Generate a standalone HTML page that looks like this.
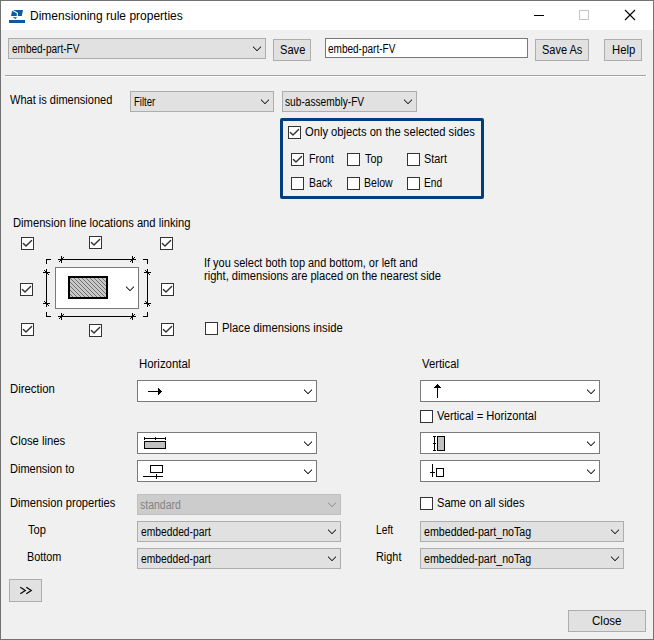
<!DOCTYPE html>
<html><head><meta charset="utf-8">
<style>
*{box-sizing:border-box;margin:0;padding:0}
html,body{width:654px;height:640px;overflow:hidden;background:#f0f0f0}
body{position:relative;font-family:"Liberation Sans",sans-serif;font-size:12px;color:#000}
.a{position:absolute;display:block}
.t{position:absolute;white-space:nowrap;line-height:14px;height:14px;transform-origin:0 0}
</style></head><body>
<div class="a" style="left:0;top:0;width:654px;height:640px;border:1px solid #727272;background:#f0f0f0"></div>
<div class="a" style="left:1px;top:1px;width:652px;height:29px;background:#fff"></div>
<svg class="a" style="left:0;top:0" width="40" height="30" viewBox="0 0 40 30">
<path d="M12.3,10 L23,10 L21.8,16 L11,16 Z" fill="#0a5aa3"/>
<path d="M12,10.1 L17.3,13.1 L17.3,16.2" fill="none" stroke="#fff" stroke-width="1.1"/>
<path d="M12.4,17.2 L17,17.2 L15.6,19 Z" fill="#0a5aa3"/>
<rect x="9" y="20" width="16" height="3" fill="#0a5aa3"/>
</svg>
<div class="a" style="left:30px;top:9px;white-space:nowrap;font-size:12px;line-height:14px;color:#000">Dimensioning rule properties</div>
<div class="a" style="left:534px;top:15px;width:10px;height:1px;background:#000"></div>
<div class="a" style="left:579px;top:10px;width:10px;height:10px;border:1px solid #c4c4c4"></div>
<svg class="a" style="left:624px;top:9px" width="12" height="12" viewBox="0 0 12 12"><path d="M1,1 L11,11 M11,1 L1,11" stroke="#000" stroke-width="1.1" fill="none"/></svg>
<div class="a" style="left:8px;top:38px;width:258px;height:21px;background:#e1e1e1;border:1px solid #adadad"></div>
<svg class="a" style="left:0;top:0" width="654" height="640" shape-rendering="crispEdges" fill="#404040"><rect x="253" y="46" width="1" height="1" fill="#8c8c8c"/><rect x="260" y="46" width="1" height="1" fill="#8c8c8c"/><rect x="254" y="47" width="1" height="1" fill="#8c8c8c"/><rect x="259" y="47" width="1" height="1" fill="#8c8c8c"/><rect x="255" y="48" width="1" height="1" fill="#8c8c8c"/><rect x="258" y="48" width="1" height="1" fill="#8c8c8c"/><rect x="256" y="49" width="1" height="1" fill="#8c8c8c"/><rect x="257" y="49" width="1" height="1" fill="#8c8c8c"/><rect x="253" y="47" width="1" height="1"/><rect x="260" y="47" width="1" height="1"/><rect x="254" y="48" width="1" height="1"/><rect x="259" y="48" width="1" height="1"/><rect x="255" y="49" width="1" height="1"/><rect x="258" y="49" width="1" height="1"/><rect x="256" y="50" width="1" height="1"/><rect x="257" y="50" width="1" height="1"/></svg>
<div class="t" style="left:12.25px;top:42px;color:#000;transform:scaleX(0.8346);">embed-part-FV</div>
<div class="a" style="left:273px;top:39px;width:38px;height:22px;background:#e1e1e1;border:1px solid #adadad"></div>
<div class="t" style="left:279.77px;top:43px;color:#000;transform:scaleX(0.9269);">Save</div>
<div class="a" style="left:325px;top:38px;width:203px;height:20px;background:#ffffff;border:1px solid #7a7a7a"></div>
<div class="t" style="left:328.00px;top:42px;color:#000;transform:scaleX(0.8346);">embed-part-FV</div>
<div class="a" style="left:535px;top:39px;width:54px;height:22px;background:#e1e1e1;border:1px solid #adadad"></div>
<div class="t" style="left:541.98px;top:43px;color:#000;transform:scaleX(0.9163);">Save As</div>
<div class="a" style="left:604px;top:39px;width:38px;height:22px;background:#e1e1e1;border:1px solid #adadad"></div>
<div class="t" style="left:612.06px;top:43px;color:#000;transform:scaleX(0.9391);">Help</div>
<div class="a" style="left:5px;top:75px;width:642px;height:2px;background:#fff"></div>
<div class="a" style="left:5px;top:75px;width:641px;height:1px;background:#a0a0a0"></div>
<div class="t" style="left:10.00px;top:93px;color:#000;transform:scaleX(0.9189);">What is dimensioned</div>
<div class="a" style="left:130px;top:91px;width:144px;height:21px;background:#e1e1e1;border:1px solid #adadad"></div>
<svg class="a" style="left:0;top:0" width="654" height="640" shape-rendering="crispEdges" fill="#404040"><rect x="261" y="99" width="1" height="1" fill="#8c8c8c"/><rect x="268" y="99" width="1" height="1" fill="#8c8c8c"/><rect x="262" y="100" width="1" height="1" fill="#8c8c8c"/><rect x="267" y="100" width="1" height="1" fill="#8c8c8c"/><rect x="263" y="101" width="1" height="1" fill="#8c8c8c"/><rect x="266" y="101" width="1" height="1" fill="#8c8c8c"/><rect x="264" y="102" width="1" height="1" fill="#8c8c8c"/><rect x="265" y="102" width="1" height="1" fill="#8c8c8c"/><rect x="261" y="100" width="1" height="1"/><rect x="268" y="100" width="1" height="1"/><rect x="262" y="101" width="1" height="1"/><rect x="267" y="101" width="1" height="1"/><rect x="263" y="102" width="1" height="1"/><rect x="266" y="102" width="1" height="1"/><rect x="264" y="103" width="1" height="1"/><rect x="265" y="103" width="1" height="1"/></svg>
<div class="t" style="left:134.11px;top:95px;color:#000;transform:scaleX(0.7923);">Filter</div>
<div class="a" style="left:282px;top:91px;width:135px;height:21px;background:#e1e1e1;border:1px solid #adadad"></div>
<svg class="a" style="left:0;top:0" width="654" height="640" shape-rendering="crispEdges" fill="#404040"><rect x="404" y="99" width="1" height="1" fill="#8c8c8c"/><rect x="411" y="99" width="1" height="1" fill="#8c8c8c"/><rect x="405" y="100" width="1" height="1" fill="#8c8c8c"/><rect x="410" y="100" width="1" height="1" fill="#8c8c8c"/><rect x="406" y="101" width="1" height="1" fill="#8c8c8c"/><rect x="409" y="101" width="1" height="1" fill="#8c8c8c"/><rect x="407" y="102" width="1" height="1" fill="#8c8c8c"/><rect x="408" y="102" width="1" height="1" fill="#8c8c8c"/><rect x="404" y="100" width="1" height="1"/><rect x="411" y="100" width="1" height="1"/><rect x="405" y="101" width="1" height="1"/><rect x="410" y="101" width="1" height="1"/><rect x="406" y="102" width="1" height="1"/><rect x="409" y="102" width="1" height="1"/><rect x="407" y="103" width="1" height="1"/><rect x="408" y="103" width="1" height="1"/></svg>
<div class="t" style="left:285.35px;top:95px;color:#000;transform:scaleX(0.8478);">sub-assembly-FV</div>
<div class="a" style="left:280px;top:118px;width:204px;height:81px;border:3px solid #003e7e;border-radius:2px"></div>
<div class="a" style="left:288px;top:126px;width:13px;height:13px;background:#fff;border:1px solid #333"></div>
<svg class="a" style="left:288px;top:126px" width="13" height="13" viewBox="0 0 13 13"><polyline points="2.4,6.4 5,9.1 10.6,3.4" fill="none" stroke="#333" stroke-width="1.4" stroke-linecap="round" stroke-linejoin="round"/></svg>
<div class="t" style="left:304.97px;top:125px;color:#000;transform:scaleX(0.9320);">Only objects on the selected sides</div>
<div class="a" style="left:291px;top:153px;width:13px;height:13px;background:#fff;border:1px solid #333"></div>
<svg class="a" style="left:291px;top:153px" width="13" height="13" viewBox="0 0 13 13"><polyline points="2.4,6.4 5,9.1 10.6,3.4" fill="none" stroke="#333" stroke-width="1.4" stroke-linecap="round" stroke-linejoin="round"/></svg>
<div class="t" style="left:308.51px;top:152px;color:#000;transform:scaleX(0.8889);">Front</div>
<div class="a" style="left:347px;top:153px;width:13px;height:13px;background:#fff;border:1px solid #333"></div>
<div class="t" style="left:365.20px;top:152px;color:#000;transform:scaleX(0.9000);">Top</div>
<div class="a" style="left:407px;top:153px;width:13px;height:13px;background:#fff;border:1px solid #333"></div>
<div class="t" style="left:423.80px;top:152px;color:#000;transform:scaleX(0.9042);">Start</div>
<div class="a" style="left:291px;top:177px;width:13px;height:13px;background:#fff;border:1px solid #333"></div>
<div class="t" style="left:308.53px;top:176px;color:#000;transform:scaleX(0.8654);">Back</div>
<div class="a" style="left:347px;top:177px;width:13px;height:13px;background:#fff;border:1px solid #333"></div>
<div class="t" style="left:364.32px;top:176px;color:#000;transform:scaleX(0.8781);">Below</div>
<div class="a" style="left:407px;top:177px;width:13px;height:13px;background:#fff;border:1px solid #333"></div>
<div class="t" style="left:424.35px;top:176px;color:#000;transform:scaleX(0.8500);">End</div>
<div class="t" style="left:13.37px;top:216px;color:#000;transform:scaleX(0.9333);">Dimension line locations and linking</div>
<div class="a" style="left:21px;top:237px;width:13px;height:13px;background:#fff;border:1px solid #333"></div>
<svg class="a" style="left:21px;top:237px" width="13" height="13" viewBox="0 0 13 13"><polyline points="2.4,6.4 5,9.1 10.6,3.4" fill="none" stroke="#333" stroke-width="1.4" stroke-linecap="round" stroke-linejoin="round"/></svg>
<div class="a" style="left:89px;top:236px;width:13px;height:13px;background:#fff;border:1px solid #333"></div>
<svg class="a" style="left:89px;top:236px" width="13" height="13" viewBox="0 0 13 13"><polyline points="2.4,6.4 5,9.1 10.6,3.4" fill="none" stroke="#333" stroke-width="1.4" stroke-linecap="round" stroke-linejoin="round"/></svg>
<div class="a" style="left:160px;top:237px;width:13px;height:13px;background:#fff;border:1px solid #333"></div>
<svg class="a" style="left:160px;top:237px" width="13" height="13" viewBox="0 0 13 13"><polyline points="2.4,6.4 5,9.1 10.6,3.4" fill="none" stroke="#333" stroke-width="1.4" stroke-linecap="round" stroke-linejoin="round"/></svg>
<div class="a" style="left:20px;top:283px;width:13px;height:13px;background:#fff;border:1px solid #333"></div>
<svg class="a" style="left:20px;top:283px" width="13" height="13" viewBox="0 0 13 13"><polyline points="2.4,6.4 5,9.1 10.6,3.4" fill="none" stroke="#333" stroke-width="1.4" stroke-linecap="round" stroke-linejoin="round"/></svg>
<div class="a" style="left:161px;top:283px;width:13px;height:13px;background:#fff;border:1px solid #333"></div>
<svg class="a" style="left:161px;top:283px" width="13" height="13" viewBox="0 0 13 13"><polyline points="2.4,6.4 5,9.1 10.6,3.4" fill="none" stroke="#333" stroke-width="1.4" stroke-linecap="round" stroke-linejoin="round"/></svg>
<div class="a" style="left:21px;top:323px;width:13px;height:13px;background:#fff;border:1px solid #333"></div>
<svg class="a" style="left:21px;top:323px" width="13" height="13" viewBox="0 0 13 13"><polyline points="2.4,6.4 5,9.1 10.6,3.4" fill="none" stroke="#333" stroke-width="1.4" stroke-linecap="round" stroke-linejoin="round"/></svg>
<div class="a" style="left:89px;top:324px;width:13px;height:13px;background:#fff;border:1px solid #333"></div>
<svg class="a" style="left:89px;top:324px" width="13" height="13" viewBox="0 0 13 13"><polyline points="2.4,6.4 5,9.1 10.6,3.4" fill="none" stroke="#333" stroke-width="1.4" stroke-linecap="round" stroke-linejoin="round"/></svg>
<div class="a" style="left:161px;top:323px;width:13px;height:13px;background:#fff;border:1px solid #333"></div>
<svg class="a" style="left:161px;top:323px" width="13" height="13" viewBox="0 0 13 13"><polyline points="2.4,6.4 5,9.1 10.6,3.4" fill="none" stroke="#333" stroke-width="1.4" stroke-linecap="round" stroke-linejoin="round"/></svg>
<svg class="a" style="left:0;top:0" width="654" height="640" viewBox="0 0 654 640" shape-rendering="crispEdges"><defs><pattern id="hp" patternUnits="userSpaceOnUse" x="0" y="0" width="4" height="4"><rect width="4" height="4" fill="#c8c8c8"/><rect x="0" y="0" width="1" height="1" fill="#707070"/><rect x="1" y="1" width="1" height="1" fill="#707070"/><rect x="2" y="2" width="1" height="1" fill="#707070"/><rect x="3" y="3" width="1" height="1" fill="#707070"/></pattern></defs><rect x="55" y="267" width="84" height="42" fill="#7a7a7a"/><rect x="56" y="268" width="82" height="40" fill="#fff"/><rect x="68" y="276" width="40" height="23" fill="#000"/><rect x="70" y="278" width="36" height="19" fill="url(#hp)"/><rect x="58" y="259" width="78" height="1" fill="#000"/><rect x="61" y="256" width="1" height="7" fill="#000"/><rect x="59" y="261" width="1" height="1" fill="#000"/><rect x="60" y="260" width="1" height="1" fill="#000"/><rect x="62" y="258" width="1" height="1" fill="#000"/><rect x="63" y="257" width="1" height="1" fill="#000"/><rect x="132" y="256" width="1" height="7" fill="#000"/><rect x="130" y="261" width="1" height="1" fill="#000"/><rect x="131" y="260" width="1" height="1" fill="#000"/><rect x="133" y="258" width="1" height="1" fill="#000"/><rect x="134" y="257" width="1" height="1" fill="#000"/><rect x="58" y="316" width="78" height="1" fill="#000"/><rect x="61" y="313" width="1" height="7" fill="#000"/><rect x="59" y="318" width="1" height="1" fill="#000"/><rect x="60" y="317" width="1" height="1" fill="#000"/><rect x="62" y="315" width="1" height="1" fill="#000"/><rect x="63" y="314" width="1" height="1" fill="#000"/><rect x="132" y="313" width="1" height="7" fill="#000"/><rect x="130" y="318" width="1" height="1" fill="#000"/><rect x="131" y="317" width="1" height="1" fill="#000"/><rect x="133" y="315" width="1" height="1" fill="#000"/><rect x="134" y="314" width="1" height="1" fill="#000"/><rect x="46" y="269" width="1" height="38" fill="#000"/><rect x="43" y="272" width="7" height="1" fill="#000"/><rect x="44" y="270" width="1" height="1" fill="#000"/><rect x="45" y="271" width="1" height="1" fill="#000"/><rect x="47" y="273" width="1" height="1" fill="#000"/><rect x="48" y="274" width="1" height="1" fill="#000"/><rect x="43" y="303" width="7" height="1" fill="#000"/><rect x="44" y="301" width="1" height="1" fill="#000"/><rect x="45" y="302" width="1" height="1" fill="#000"/><rect x="47" y="304" width="1" height="1" fill="#000"/><rect x="48" y="305" width="1" height="1" fill="#000"/><rect x="147" y="269" width="1" height="38" fill="#000"/><rect x="144" y="272" width="7" height="1" fill="#000"/><rect x="145" y="270" width="1" height="1" fill="#000"/><rect x="146" y="271" width="1" height="1" fill="#000"/><rect x="148" y="273" width="1" height="1" fill="#000"/><rect x="149" y="274" width="1" height="1" fill="#000"/><rect x="144" y="303" width="7" height="1" fill="#000"/><rect x="145" y="301" width="1" height="1" fill="#000"/><rect x="146" y="302" width="1" height="1" fill="#000"/><rect x="148" y="304" width="1" height="1" fill="#000"/><rect x="149" y="305" width="1" height="1" fill="#000"/><rect x="46" y="259" width="5" height="1" fill="#000"/><rect x="46" y="259" width="1" height="5" fill="#000"/><rect x="143" y="259" width="5" height="1" fill="#000"/><rect x="147" y="259" width="1" height="5" fill="#000"/><rect x="46" y="316" width="5" height="1" fill="#000"/><rect x="46" y="312" width="1" height="5" fill="#000"/><rect x="143" y="316" width="5" height="1" fill="#000"/><rect x="147" y="312" width="1" height="5" fill="#000"/></svg>
<svg class="a" style="left:0;top:0" width="654" height="640" shape-rendering="crispEdges" fill="#404040"><rect x="126" y="286" width="1" height="1" fill="#8c8c8c"/><rect x="133" y="286" width="1" height="1" fill="#8c8c8c"/><rect x="127" y="287" width="1" height="1" fill="#8c8c8c"/><rect x="132" y="287" width="1" height="1" fill="#8c8c8c"/><rect x="128" y="288" width="1" height="1" fill="#8c8c8c"/><rect x="131" y="288" width="1" height="1" fill="#8c8c8c"/><rect x="129" y="289" width="1" height="1" fill="#8c8c8c"/><rect x="130" y="289" width="1" height="1" fill="#8c8c8c"/><rect x="126" y="287" width="1" height="1"/><rect x="133" y="287" width="1" height="1"/><rect x="127" y="288" width="1" height="1"/><rect x="132" y="288" width="1" height="1"/><rect x="128" y="289" width="1" height="1"/><rect x="131" y="289" width="1" height="1"/><rect x="129" y="290" width="1" height="1"/><rect x="130" y="290" width="1" height="1"/></svg>
<div class="t" style="left:204.19px;top:256px;color:#000;transform:scaleX(0.9120);">If you select both top and bottom, or left and</div>
<div class="t" style="left:204.07px;top:269px;color:#000;transform:scaleX(0.9276);">right, dimensions are placed on the nearest side</div>
<div class="a" style="left:205px;top:322px;width:13px;height:13px;background:#fff;border:1px solid #333"></div>
<div class="t" style="left:222.21px;top:321px;color:#000;transform:scaleX(0.9378);">Place dimensions inside</div>
<div class="t" style="left:138.95px;top:357px;color:#000;transform:scaleX(0.9500);">Horizontal</div>
<div class="t" style="left:422.30px;top:357px;color:#000;transform:scaleX(0.9385);">Vertical</div>
<div class="t" style="left:9.95px;top:382px;color:#000;transform:scaleX(0.9457);">Direction</div>
<div class="a" style="left:137px;top:380px;width:180px;height:22px;background:#ffffff;border:1px solid #7a7a7a"></div>
<svg class="a" style="left:0;top:0" width="654" height="640" shape-rendering="crispEdges" fill="#404040"><rect x="304" y="389" width="1" height="1" fill="#8c8c8c"/><rect x="311" y="389" width="1" height="1" fill="#8c8c8c"/><rect x="305" y="390" width="1" height="1" fill="#8c8c8c"/><rect x="310" y="390" width="1" height="1" fill="#8c8c8c"/><rect x="306" y="391" width="1" height="1" fill="#8c8c8c"/><rect x="309" y="391" width="1" height="1" fill="#8c8c8c"/><rect x="307" y="392" width="1" height="1" fill="#8c8c8c"/><rect x="308" y="392" width="1" height="1" fill="#8c8c8c"/><rect x="304" y="390" width="1" height="1"/><rect x="311" y="390" width="1" height="1"/><rect x="305" y="391" width="1" height="1"/><rect x="310" y="391" width="1" height="1"/><rect x="306" y="392" width="1" height="1"/><rect x="309" y="392" width="1" height="1"/><rect x="307" y="393" width="1" height="1"/><rect x="308" y="393" width="1" height="1"/></svg>
<div class="a" style="left:420px;top:380px;width:180px;height:22px;background:#ffffff;border:1px solid #7a7a7a"></div>
<svg class="a" style="left:0;top:0" width="654" height="640" shape-rendering="crispEdges" fill="#404040"><rect x="587" y="389" width="1" height="1" fill="#8c8c8c"/><rect x="594" y="389" width="1" height="1" fill="#8c8c8c"/><rect x="588" y="390" width="1" height="1" fill="#8c8c8c"/><rect x="593" y="390" width="1" height="1" fill="#8c8c8c"/><rect x="589" y="391" width="1" height="1" fill="#8c8c8c"/><rect x="592" y="391" width="1" height="1" fill="#8c8c8c"/><rect x="590" y="392" width="1" height="1" fill="#8c8c8c"/><rect x="591" y="392" width="1" height="1" fill="#8c8c8c"/><rect x="587" y="390" width="1" height="1"/><rect x="594" y="390" width="1" height="1"/><rect x="588" y="391" width="1" height="1"/><rect x="593" y="391" width="1" height="1"/><rect x="589" y="392" width="1" height="1"/><rect x="592" y="392" width="1" height="1"/><rect x="590" y="393" width="1" height="1"/><rect x="591" y="393" width="1" height="1"/></svg>
<div class="a" style="left:420px;top:410px;width:13px;height:13px;background:#fff;border:1px solid #333"></div>
<div class="t" style="left:437.40px;top:409px;color:#000;transform:scaleX(0.9299);">Vertical = Horizontal</div>
<div class="t" style="left:10.16px;top:434px;color:#000;transform:scaleX(0.9404);">Close lines</div>
<div class="a" style="left:137px;top:432px;width:180px;height:22px;background:#ffffff;border:1px solid #7a7a7a"></div>
<svg class="a" style="left:0;top:0" width="654" height="640" shape-rendering="crispEdges" fill="#404040"><rect x="304" y="441" width="1" height="1" fill="#8c8c8c"/><rect x="311" y="441" width="1" height="1" fill="#8c8c8c"/><rect x="305" y="442" width="1" height="1" fill="#8c8c8c"/><rect x="310" y="442" width="1" height="1" fill="#8c8c8c"/><rect x="306" y="443" width="1" height="1" fill="#8c8c8c"/><rect x="309" y="443" width="1" height="1" fill="#8c8c8c"/><rect x="307" y="444" width="1" height="1" fill="#8c8c8c"/><rect x="308" y="444" width="1" height="1" fill="#8c8c8c"/><rect x="304" y="442" width="1" height="1"/><rect x="311" y="442" width="1" height="1"/><rect x="305" y="443" width="1" height="1"/><rect x="310" y="443" width="1" height="1"/><rect x="306" y="444" width="1" height="1"/><rect x="309" y="444" width="1" height="1"/><rect x="307" y="445" width="1" height="1"/><rect x="308" y="445" width="1" height="1"/></svg>
<div class="a" style="left:420px;top:432px;width:180px;height:22px;background:#ffffff;border:1px solid #7a7a7a"></div>
<svg class="a" style="left:0;top:0" width="654" height="640" shape-rendering="crispEdges" fill="#404040"><rect x="587" y="441" width="1" height="1" fill="#8c8c8c"/><rect x="594" y="441" width="1" height="1" fill="#8c8c8c"/><rect x="588" y="442" width="1" height="1" fill="#8c8c8c"/><rect x="593" y="442" width="1" height="1" fill="#8c8c8c"/><rect x="589" y="443" width="1" height="1" fill="#8c8c8c"/><rect x="592" y="443" width="1" height="1" fill="#8c8c8c"/><rect x="590" y="444" width="1" height="1" fill="#8c8c8c"/><rect x="591" y="444" width="1" height="1" fill="#8c8c8c"/><rect x="587" y="442" width="1" height="1"/><rect x="594" y="442" width="1" height="1"/><rect x="588" y="443" width="1" height="1"/><rect x="593" y="443" width="1" height="1"/><rect x="589" y="444" width="1" height="1"/><rect x="592" y="444" width="1" height="1"/><rect x="590" y="445" width="1" height="1"/><rect x="591" y="445" width="1" height="1"/></svg>
<div class="t" style="left:10.18px;top:462px;color:#000;transform:scaleX(0.9188);">Dimension to</div>
<div class="a" style="left:137px;top:460px;width:180px;height:22px;background:#ffffff;border:1px solid #7a7a7a"></div>
<svg class="a" style="left:0;top:0" width="654" height="640" shape-rendering="crispEdges" fill="#404040"><rect x="304" y="469" width="1" height="1" fill="#8c8c8c"/><rect x="311" y="469" width="1" height="1" fill="#8c8c8c"/><rect x="305" y="470" width="1" height="1" fill="#8c8c8c"/><rect x="310" y="470" width="1" height="1" fill="#8c8c8c"/><rect x="306" y="471" width="1" height="1" fill="#8c8c8c"/><rect x="309" y="471" width="1" height="1" fill="#8c8c8c"/><rect x="307" y="472" width="1" height="1" fill="#8c8c8c"/><rect x="308" y="472" width="1" height="1" fill="#8c8c8c"/><rect x="304" y="470" width="1" height="1"/><rect x="311" y="470" width="1" height="1"/><rect x="305" y="471" width="1" height="1"/><rect x="310" y="471" width="1" height="1"/><rect x="306" y="472" width="1" height="1"/><rect x="309" y="472" width="1" height="1"/><rect x="307" y="473" width="1" height="1"/><rect x="308" y="473" width="1" height="1"/></svg>
<div class="a" style="left:420px;top:460px;width:180px;height:22px;background:#ffffff;border:1px solid #7a7a7a"></div>
<svg class="a" style="left:0;top:0" width="654" height="640" shape-rendering="crispEdges" fill="#404040"><rect x="587" y="469" width="1" height="1" fill="#8c8c8c"/><rect x="594" y="469" width="1" height="1" fill="#8c8c8c"/><rect x="588" y="470" width="1" height="1" fill="#8c8c8c"/><rect x="593" y="470" width="1" height="1" fill="#8c8c8c"/><rect x="589" y="471" width="1" height="1" fill="#8c8c8c"/><rect x="592" y="471" width="1" height="1" fill="#8c8c8c"/><rect x="590" y="472" width="1" height="1" fill="#8c8c8c"/><rect x="591" y="472" width="1" height="1" fill="#8c8c8c"/><rect x="587" y="470" width="1" height="1"/><rect x="594" y="470" width="1" height="1"/><rect x="588" y="471" width="1" height="1"/><rect x="593" y="471" width="1" height="1"/><rect x="589" y="472" width="1" height="1"/><rect x="592" y="472" width="1" height="1"/><rect x="590" y="473" width="1" height="1"/><rect x="591" y="473" width="1" height="1"/></svg>
<svg class="a" style="left:0;top:0" width="654" height="640" viewBox="0 0 654 640" shape-rendering="crispEdges"><rect x="148" y="391" width="10" height="1" fill="#000"/><rect x="158" y="388" width="1" height="7" fill="#000"/><rect x="159" y="389" width="1" height="5" fill="#000"/><rect x="160" y="390" width="1" height="3" fill="#000"/><rect x="161" y="391" width="1" height="1" fill="#000"/><rect x="437" y="388" width="1" height="10" fill="#000"/><rect x="434" y="387" width="7" height="1" fill="#000"/><rect x="435" y="386" width="5" height="1" fill="#000"/><rect x="436" y="385" width="3" height="1" fill="#000"/><rect x="437" y="384" width="1" height="1" fill="#000"/><rect x="144" y="438" width="22" height="1" fill="#000"/><rect x="144" y="437" width="1" height="3" fill="#000"/><rect x="155" y="437" width="1" height="3" fill="#000"/><rect x="165" y="437" width="1" height="3" fill="#000"/><rect x="144" y="441" width="22" height="8" fill="#000"/><rect x="145" y="442" width="20" height="6" fill="#c0c0c0"/><rect x="150" y="465" width="13" height="8" fill="#000"/><rect x="151" y="466" width="11" height="6" fill="#fff"/><rect x="143" y="476" width="20" height="1" fill="#000"/><rect x="156" y="474" width="1" height="5" fill="#000"/><rect x="434" y="436" width="1" height="15" fill="#000"/><rect x="433" y="436" width="3" height="1" fill="#000"/><rect x="433" y="443" width="3" height="1" fill="#000"/><rect x="433" y="450" width="3" height="1" fill="#000"/><rect x="437" y="436" width="8" height="15" fill="#000"/><rect x="438" y="437" width="6" height="13" fill="#c0c0c0"/><rect x="432" y="464" width="1" height="13" fill="#000"/><rect x="430" y="472" width="5" height="1" fill="#000"/><rect x="436" y="468" width="8" height="9" fill="#000"/><rect x="437" y="469" width="6" height="7" fill="#fff"/></svg>
<div class="t" style="left:9.77px;top:496px;color:#000;transform:scaleX(0.9286);">Dimension properties</div>
<div class="a" style="left:137px;top:494px;width:204px;height:21px;background:#cccccc;border:1px solid #bfbfbf"></div>
<svg class="a" style="left:0;top:0" width="654" height="640" shape-rendering="crispEdges" fill="#a0a0a0"><rect x="328" y="502" width="1" height="1" fill="#b8b8b8"/><rect x="335" y="502" width="1" height="1" fill="#b8b8b8"/><rect x="329" y="503" width="1" height="1" fill="#b8b8b8"/><rect x="334" y="503" width="1" height="1" fill="#b8b8b8"/><rect x="330" y="504" width="1" height="1" fill="#b8b8b8"/><rect x="333" y="504" width="1" height="1" fill="#b8b8b8"/><rect x="331" y="505" width="1" height="1" fill="#b8b8b8"/><rect x="332" y="505" width="1" height="1" fill="#b8b8b8"/><rect x="328" y="503" width="1" height="1"/><rect x="335" y="503" width="1" height="1"/><rect x="329" y="504" width="1" height="1"/><rect x="334" y="504" width="1" height="1"/><rect x="330" y="505" width="1" height="1"/><rect x="333" y="505" width="1" height="1"/><rect x="331" y="506" width="1" height="1"/><rect x="332" y="506" width="1" height="1"/></svg>
<div class="t" style="left:140.33px;top:498px;color:#838383;transform:scaleX(0.8733);">standard</div>
<div class="a" style="left:420px;top:497px;width:13px;height:13px;background:#fff;border:1px solid #333"></div>
<div class="t" style="left:436.88px;top:496px;color:#000;transform:scaleX(0.9237);">Same on all sides</div>
<div class="t" style="left:27.90px;top:523px;color:#000;transform:scaleX(0.9263);">Top</div>
<div class="a" style="left:137px;top:521px;width:204px;height:21px;background:#e1e1e1;border:1px solid #adadad"></div>
<svg class="a" style="left:0;top:0" width="654" height="640" shape-rendering="crispEdges" fill="#404040"><rect x="328" y="529" width="1" height="1" fill="#8c8c8c"/><rect x="335" y="529" width="1" height="1" fill="#8c8c8c"/><rect x="329" y="530" width="1" height="1" fill="#8c8c8c"/><rect x="334" y="530" width="1" height="1" fill="#8c8c8c"/><rect x="330" y="531" width="1" height="1" fill="#8c8c8c"/><rect x="333" y="531" width="1" height="1" fill="#8c8c8c"/><rect x="331" y="532" width="1" height="1" fill="#8c8c8c"/><rect x="332" y="532" width="1" height="1" fill="#8c8c8c"/><rect x="328" y="530" width="1" height="1"/><rect x="335" y="530" width="1" height="1"/><rect x="329" y="531" width="1" height="1"/><rect x="334" y="531" width="1" height="1"/><rect x="330" y="532" width="1" height="1"/><rect x="333" y="532" width="1" height="1"/><rect x="331" y="533" width="1" height="1"/><rect x="332" y="533" width="1" height="1"/></svg>
<div class="t" style="left:141.20px;top:525px;color:#000;transform:scaleX(0.8568);">embedded-part</div>
<div class="t" style="left:376.45px;top:523px;color:#000;transform:scaleX(0.8526);">Left</div>
<div class="a" style="left:420px;top:521px;width:204px;height:21px;background:#e1e1e1;border:1px solid #adadad"></div>
<svg class="a" style="left:0;top:0" width="654" height="640" shape-rendering="crispEdges" fill="#404040"><rect x="611" y="529" width="1" height="1" fill="#8c8c8c"/><rect x="618" y="529" width="1" height="1" fill="#8c8c8c"/><rect x="612" y="530" width="1" height="1" fill="#8c8c8c"/><rect x="617" y="530" width="1" height="1" fill="#8c8c8c"/><rect x="613" y="531" width="1" height="1" fill="#8c8c8c"/><rect x="616" y="531" width="1" height="1" fill="#8c8c8c"/><rect x="614" y="532" width="1" height="1" fill="#8c8c8c"/><rect x="615" y="532" width="1" height="1" fill="#8c8c8c"/><rect x="611" y="530" width="1" height="1"/><rect x="618" y="530" width="1" height="1"/><rect x="612" y="531" width="1" height="1"/><rect x="617" y="531" width="1" height="1"/><rect x="613" y="532" width="1" height="1"/><rect x="616" y="532" width="1" height="1"/><rect x="614" y="533" width="1" height="1"/><rect x="615" y="533" width="1" height="1"/></svg>
<div class="t" style="left:424.10px;top:525px;color:#000;transform:scaleX(0.8875);">embedded-part_noTag</div>
<div class="t" style="left:27.00px;top:550px;color:#000;transform:scaleX(0.9028);">Bottom</div>
<div class="a" style="left:137px;top:548px;width:204px;height:21px;background:#e1e1e1;border:1px solid #adadad"></div>
<svg class="a" style="left:0;top:0" width="654" height="640" shape-rendering="crispEdges" fill="#404040"><rect x="328" y="556" width="1" height="1" fill="#8c8c8c"/><rect x="335" y="556" width="1" height="1" fill="#8c8c8c"/><rect x="329" y="557" width="1" height="1" fill="#8c8c8c"/><rect x="334" y="557" width="1" height="1" fill="#8c8c8c"/><rect x="330" y="558" width="1" height="1" fill="#8c8c8c"/><rect x="333" y="558" width="1" height="1" fill="#8c8c8c"/><rect x="331" y="559" width="1" height="1" fill="#8c8c8c"/><rect x="332" y="559" width="1" height="1" fill="#8c8c8c"/><rect x="328" y="557" width="1" height="1"/><rect x="335" y="557" width="1" height="1"/><rect x="329" y="558" width="1" height="1"/><rect x="334" y="558" width="1" height="1"/><rect x="330" y="559" width="1" height="1"/><rect x="333" y="559" width="1" height="1"/><rect x="331" y="560" width="1" height="1"/><rect x="332" y="560" width="1" height="1"/></svg>
<div class="t" style="left:141.20px;top:552px;color:#000;transform:scaleX(0.8568);">embedded-part</div>
<div class="t" style="left:376.39px;top:550px;color:#000;transform:scaleX(0.9074);">Right</div>
<div class="a" style="left:420px;top:548px;width:204px;height:21px;background:#e1e1e1;border:1px solid #adadad"></div>
<svg class="a" style="left:0;top:0" width="654" height="640" shape-rendering="crispEdges" fill="#404040"><rect x="611" y="556" width="1" height="1" fill="#8c8c8c"/><rect x="618" y="556" width="1" height="1" fill="#8c8c8c"/><rect x="612" y="557" width="1" height="1" fill="#8c8c8c"/><rect x="617" y="557" width="1" height="1" fill="#8c8c8c"/><rect x="613" y="558" width="1" height="1" fill="#8c8c8c"/><rect x="616" y="558" width="1" height="1" fill="#8c8c8c"/><rect x="614" y="559" width="1" height="1" fill="#8c8c8c"/><rect x="615" y="559" width="1" height="1" fill="#8c8c8c"/><rect x="611" y="557" width="1" height="1"/><rect x="618" y="557" width="1" height="1"/><rect x="612" y="558" width="1" height="1"/><rect x="617" y="558" width="1" height="1"/><rect x="613" y="559" width="1" height="1"/><rect x="616" y="559" width="1" height="1"/><rect x="614" y="560" width="1" height="1"/><rect x="615" y="560" width="1" height="1"/></svg>
<div class="t" style="left:424.10px;top:552px;color:#000;transform:scaleX(0.8875);">embedded-part_noTag</div>
<div class="a" style="left:9px;top:579px;width:33px;height:23px;background:#e1e1e1;border:1px solid #adadad"></div>
<svg class="a" style="left:0;top:0" width="654" height="640"><path d="M20.3,587.3 L25.3,590.5 L20.3,593.7 M26.3,587.3 L31.3,590.5 L26.3,593.7" fill="none" stroke="#000" stroke-width="1.15"/></svg>
<div class="a" style="left:568px;top:610px;width:78px;height:22px;background:#e1e1e1;border:1px solid #adadad"></div>
<div class="t" style="left:591.74px;top:614px;color:#000;transform:scaleX(0.9621);">Close</div>
</body></html>
